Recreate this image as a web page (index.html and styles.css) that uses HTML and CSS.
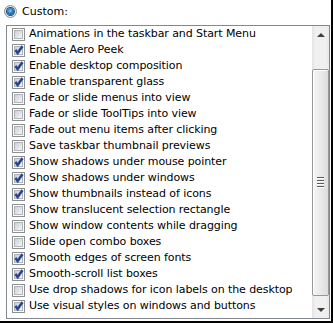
FILE: index.html
```html
<!DOCTYPE html>
<html>
<head>
<meta charset="utf-8">
<link rel="stylesheet" href="styles.css">
</head>
<body>
<div class="frame">
  <div class="radio-row">
    <span class="radio"><span class="dot"></span></span>
    <span class="label">Custom:</span>
  </div>
  <div class="listbox">
    <ul class="items">
      <li><span class="cb"></span>Animations in the taskbar and Start Menu</li>
      <li><span class="cb on"></span>Enable Aero Peek</li>
      <li><span class="cb on"></span>Enable desktop composition</li>
      <li><span class="cb on"></span>Enable transparent glass</li>
      <li><span class="cb"></span>Fade or slide menus into view</li>
      <li><span class="cb"></span>Fade or slide ToolTips into view</li>
      <li><span class="cb"></span>Fade out menu items after clicking</li>
      <li><span class="cb"></span>Save taskbar thumbnail previews</li>
      <li><span class="cb on"></span>Show shadows under mouse pointer</li>
      <li><span class="cb on"></span>Show shadows under windows</li>
      <li><span class="cb on"></span>Show thumbnails instead of icons</li>
      <li><span class="cb"></span>Show translucent selection rectangle</li>
      <li><span class="cb"></span>Show window contents while dragging</li>
      <li><span class="cb"></span>Slide open combo boxes</li>
      <li><span class="cb on"></span>Smooth edges of screen fonts</li>
      <li><span class="cb on"></span>Smooth-scroll list boxes</li>
      <li><span class="cb"></span>Use drop shadows for icon labels on the desktop</li>
      <li><span class="cb on"></span>Use visual styles on windows and buttons</li>
    </ul>
    <div class="scrollbar">
      <div class="arrow"><span class="tri up"></span></div>
      <div class="track">
        <div class="thumb"><span class="grip"></span><span class="grip"></span><span class="grip"></span><span class="grip"></span></div>
      </div>
      <div class="arrow"><span class="tri down"></span></div>
    </div>
  </div>
</div>
</body>
</html>
```
FILE: styles.css
```css
html, body {
  margin: 0;
  padding: 0;
  background: #fff;
}
.frame {
  width: 331px;
  height: 321px;
  border-right: 2px solid #000;
  border-bottom: 2px solid #000;
  font-family: "DejaVu Sans", Verdana, sans-serif;
  font-size: 11px;
  color: #000;
  overflow: hidden;
}
.radio-row {
  display: flex;
  align-items: center;
  height: 13px;
  padding: 5px 0 0 4px;
  gap: 5px;
}
.radio {
  box-sizing: border-box;
  width: 13px;
  height: 13px;
  border-radius: 50%;
  border: 1px solid #8e8f8f;
  background: linear-gradient(135deg, #d6d9dd, #f9f9f9);
  display: flex;
  align-items: center;
  justify-content: center;
}
.dot {
  width: 7px;
  height: 7px;
  border-radius: 50%;
  background: radial-gradient(circle at 45% 40%, #8cd7ff 0, #2a8fd8 35%, #0d4f8f 80%, #083768 100%);
  box-shadow: 0 0 0 1px #294a6c;
}
.label {
  line-height: 13px;
}
.listbox {
  box-sizing: border-box;
  margin: 7px 0 0 6px;
  width: 324px;
  height: 294px;
  border: 1px solid #828790;
  display: flex;
}
.items {
  flex: 1;
  list-style: none;
  margin: 0;
  padding: 0 0 0 5px;
  overflow: hidden;
}
.items li {
  display: flex;
  align-items: center;
  height: 16px;
  line-height: 16px;
  white-space: nowrap;
  gap: 4px;
  letter-spacing: -0.08px;
}
.cb {
  position: relative;
  flex: none;
  box-sizing: border-box;
  width: 13px;
  height: 13px;
  border: 1px solid #8e8f8f;
  background: #fff;
}
.cb::before {
  content: "";
  position: absolute;
  left: 1px;
  top: 1px;
  width: 9px;
  height: 9px;
  border: 1px solid #aeb3b9;
  box-sizing: border-box;
  background: linear-gradient(135deg, #cbcfd5, #f6f6f6);
}
.cb.on::after {
  content: "";
  position: absolute;
  left: 0;
  top: 0;
  width: 11px;
  height: 11px;
  background: url("data:image/svg+xml,%3Csvg xmlns='http://www.w3.org/2000/svg' width='11' height='11' viewBox='0 0 11 11'%3E%3Cpath d='M1.6 5.8 L3.3 4.2 L4.5 6.1 L8.6 0.6 L10.3 2 L4.6 10 Z' fill='%23233f8e' stroke='%234d66ac' stroke-width='0.5'/%3E%3C/svg%3E") no-repeat;
}
.scrollbar {
  width: 17px;
  display: flex;
  flex-direction: column;
  background: linear-gradient(to right, #e3e3e3, #f0f0f0 20%, #f0f0f0 80%, #e8e8e8);
}
.arrow {
  height: 17px;
  display: flex;
  align-items: center;
  justify-content: center;
}
.tri {
  width: 0;
  height: 0;
  border-left: 4px solid transparent;
  border-right: 4px solid transparent;
}
.tri.up {
  border-bottom: 4px solid #404040;
}
.tri.down {
  border-top: 4px solid #404040;
}
.track {
  flex: 1;
}
.thumb {
  box-sizing: border-box;
  margin: 26px 0 0 0;
  height: 227px;
  border: 1px solid #979797;
  border-radius: 2px;
  background: linear-gradient(to right, #f5f5f5, #eaeaea 50%, #dcdcdc);
  box-shadow: inset 1px 1px 0 #fff;
  display: flex;
  flex-direction: column;
  align-items: center;
  justify-content: center;
  gap: 1px;
}
.grip {
  width: 7px;
  height: 1px;
  border-top: 1px solid #5a5a5a;
  background: #fff;
}
```
